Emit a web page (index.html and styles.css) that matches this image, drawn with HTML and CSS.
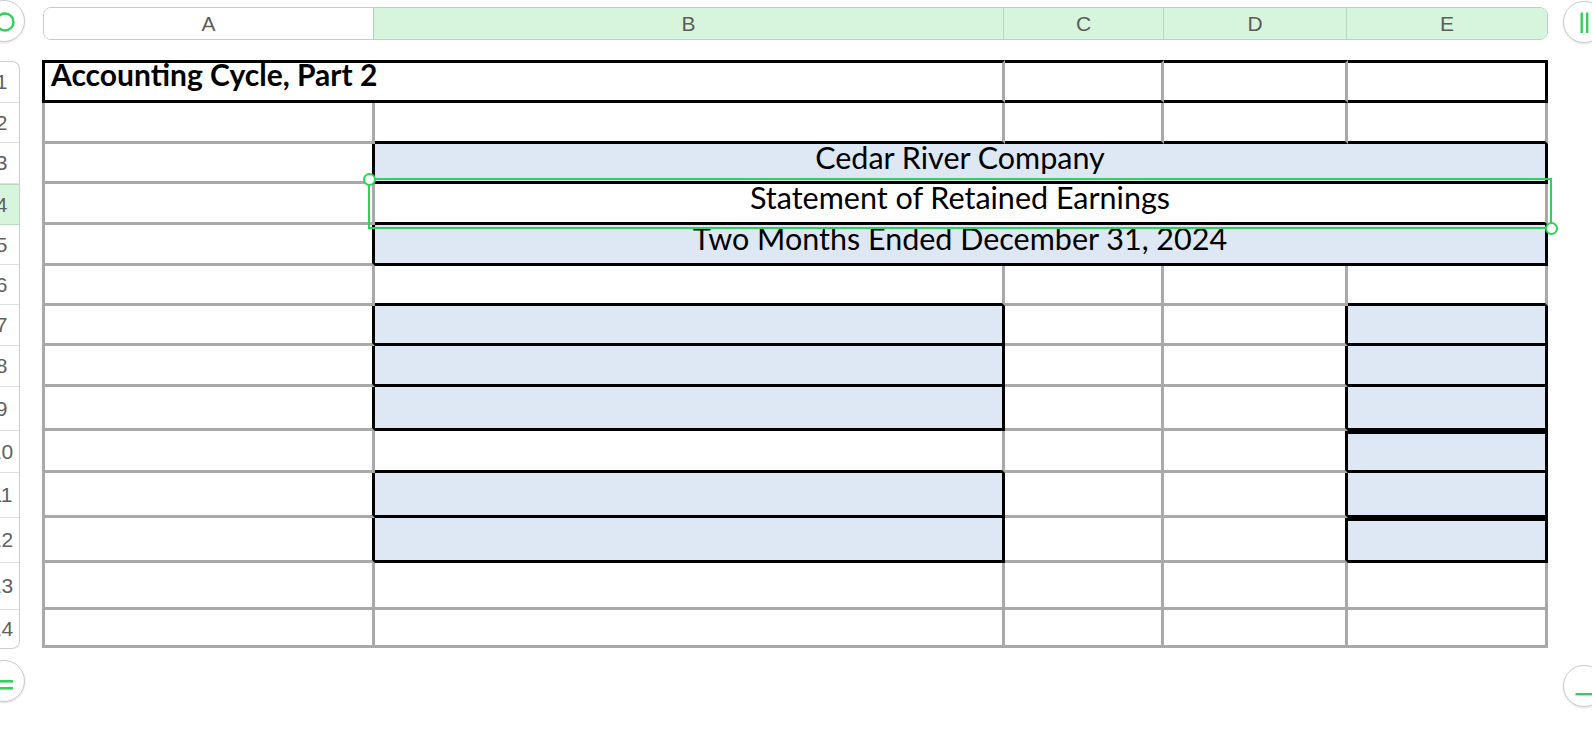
FILE: index.html
```html
<!DOCTYPE html>
<html>
<head>
<meta charset="utf-8">
<link rel="stylesheet" href="styles.css">
</head>
<body>
<div class="app">
  <div class="colhdr">
    <div class="ch ch-a">A</div>
    <div class="ch sel">B</div>
    <div class="ch sel">C</div>
    <div class="ch sel">D</div>
    <div class="ch sel last">E</div>
  </div>
  <div class="main">
    <div class="rowhdr">
      <div class="rh r1">1</div>
      <div class="rh r2">2</div>
      <div class="rh r3">3</div>
      <div class="rh r4 on">4</div>
      <div class="rh r5">5</div>
      <div class="rh r6">6</div>
      <div class="rh r7">7</div>
      <div class="rh r8">8</div>
      <div class="rh r9">9</div>
      <div class="rh r10">10</div>
      <div class="rh r11">11</div>
      <div class="rh r12">12</div>
      <div class="rh r13">13</div>
      <div class="rh r14">14</div>
    </div>
    <div class="grid">
      <!-- row 1 -->
      <div class="c l t lk bk span2"><span class="title">Accounting Cycle, Part 2</span></div>
      <div class="c t bk"></div>
      <div class="c t bk"></div>
      <div class="c t bk rk"></div>
      <!-- row 2 -->
      <div class="c l"></div>
      <div class="c bk"></div>
      <div class="c bk"></div>
      <div class="c bk"></div>
      <div class="c bk"></div>
      <!-- row 3 -->
      <div class="c l rk"></div>
      <div class="c span4 blue rk bk head">Cedar River Company</div>
      <!-- row 4 -->
      <div class="c l"></div>
      <div class="c span4 bk head">Statement of Retained Earnings</div>
      <!-- row 5 -->
      <div class="c l rk"></div>
      <div class="c span4 blue rk bk head">Two Months Ended December 31, 2024</div>
      <!-- row 6 -->
      <div class="c l"></div>
      <div class="c bk"></div>
      <div class="c"></div>
      <div class="c"></div>
      <div class="c bk"></div>
      <!-- row 7 -->
      <div class="c l rk"></div>
      <div class="c blue rk bk"></div>
      <div class="c"></div>
      <div class="c rk"></div>
      <div class="c blue rk bk"></div>
      <!-- row 8 -->
      <div class="c l rk"></div>
      <div class="c blue rk bk"></div>
      <div class="c"></div>
      <div class="c rk"></div>
      <div class="c blue rk bk"></div>
      <!-- row 9 -->
      <div class="c l rk"></div>
      <div class="c blue rk bk"></div>
      <div class="c"></div>
      <div class="c rk"></div>
      <div class="c blue rk bk"></div>
      <!-- row 10 -->
      <div class="c l"></div>
      <div class="c bk"></div>
      <div class="c"></div>
      <div class="c rk"></div>
      <div class="c blue tk rk bk"></div>
      <!-- row 11 -->
      <div class="c l rk"></div>
      <div class="c blue rk bk"></div>
      <div class="c"></div>
      <div class="c rk"></div>
      <div class="c blue rk bk"></div>
      <!-- row 12 -->
      <div class="c l rk"></div>
      <div class="c blue rk bk"></div>
      <div class="c"></div>
      <div class="c rk"></div>
      <div class="c blue tk rk bk"></div>
      <!-- row 13 -->
      <div class="c l"></div>
      <div class="c"></div>
      <div class="c"></div>
      <div class="c"></div>
      <div class="c"></div>
      <!-- row 14 -->
      <div class="c l"></div>
      <div class="c"></div>
      <div class="c"></div>
      <div class="c"></div>
      <div class="c"></div>
    </div>
  </div>

  <div class="selection">
    <span class="handle h-tl"></span>
    <span class="handle h-br"></span>
  </div>

  <div class="ctl ctl-tl">
    <svg width="42" height="42" viewBox="0 0 42 42"><circle cx="22" cy="22" r="8.5" fill="none" stroke="#30d158" stroke-width="2.4"/></svg>
  </div>
  <div class="ctl ctl-tr">
    <svg width="42" height="42" viewBox="0 0 42 42"><rect x="17.5" y="11.5" width="2.4" height="20.5" fill="#30d158"/><rect x="23" y="11.5" width="2.4" height="20.5" fill="#30d158"/></svg>
  </div>
  <div class="ctl ctl-bl">
    <svg width="42" height="42" viewBox="0 0 42 42"><rect x="10" y="20" width="20" height="2.6" fill="#30d158"/><rect x="10" y="27" width="20" height="2.6" fill="#30d158"/></svg>
  </div>
  <div class="ctl ctl-br">
    <svg width="42" height="42" viewBox="0 0 42 42"><rect x="12.5" y="28" width="20" height="2.4" fill="#30d158"/></svg>
  </div>
</div>
</body>
</html>
```

FILE: styles.css
```css
html, body {
  margin: 0;
  padding: 0;
  background: #ffffff;
}

.app {
  position: relative;
  width: 1592px;
  height: 736px;
  overflow: hidden;
  background: #ffffff;
  font-family: "Liberation Sans", Arial, sans-serif;
}

/* column header bar */
.colhdr {
  margin: 7px 0 0 43px;
  width: 1505px;
  height: 33px;
  box-sizing: border-box;
  border: 1px solid #c9c9c9;
  border-radius: 8px;
  overflow: hidden;
  display: grid;
  grid-template-columns: 330px 630px 160px 183px 1fr;
}

.ch {
  display: flex;
  align-items: center;
  justify-content: center;
  font-size: 21px;
  color: #5c5c5c;
  border-right: 1px solid #b9d9bf;
  background: #ffffff;
}

.ch-a {
  border-right-color: #c4c4c4;
}

.ch.sel {
  background: #d7f5dc;
}

.ch.last {
  border-right: none;
}

/* main area */
.main {
  display: flex;
  align-items: flex-start;
  margin-top: 20px;
}

.rowhdr {
  margin-left: -16px;
  margin-top: 1px;
  width: 36px;
  box-sizing: border-box;
  border: 1px solid #cdcdcd;
  border-left: none;
  border-radius: 0 8px 8px 0;
  overflow: hidden;
  display: grid;
  grid-template-rows: 41px 40px 41px 41px 40px 40px 41px 41px 44px 42px 45px 45px 47px 38px;
  flex: none;
}

.rh {
  display: flex;
  align-items: center;
  justify-content: center;
  font-size: 21px;
  color: #5f5f5f;
  border-bottom: 1px solid #dedede;
  box-sizing: border-box;
}

.rh.r14 {
  border-bottom: none;
}

.rh.on {
  background: #d7f5dc;
  border-top: 1px solid #b9d9bf;
  border-bottom-color: #b9d9bf;
}

/* sheet grid */
.grid {
  margin-left: 22px;
  display: grid;
  grid-template-columns: 333px 630px 159px 184px 200px;
  grid-template-rows: 43px 41px 40px 41px 41px 40px 40px 41px 44px 42px 45px 45px 47px 38px;
  flex: none;
  margin-top: 0;
}

.c {
  box-sizing: border-box;
  border-right: 3px solid #a9a9a9;
  border-bottom: 3px solid #a9a9a9;
  min-width: 0;
  background: #ffffff;
}

.c.l { border-left: 3px solid #a9a9a9; }
.c.t { border-top: 3px solid #000000; }
.c.lk { border-left-color: #000000; }
.c.rk { border-right-color: #000000; }
.c.bk { border-bottom-color: #000000; }
.c.tk { border-top: 3px solid #000000; }

.c.blue { background: #dde8f4; }

.span2 { grid-column: span 2; }
.span4 { grid-column: span 4; }

.title {
  display: block;
  padding-left: 6px;
  font-family: "Lato", "Liberation Sans", sans-serif;
  font-weight: 700;
  font-size: 30px;
  line-height: 22px;
  white-space: nowrap;
  color: #000000;
}

.head {
  font-family: "Lato", "Liberation Sans", sans-serif;
  font-size: 30.5px;
  line-height: 26px;
  text-align: center;
  color: #000000;
  white-space: nowrap;
}

/* selection overlay */
.selection {
  position: absolute;
  left: 368px;
  top: 178px;
  width: 1184px;
  height: 51px;
  box-sizing: border-box;
  border: 2px solid #30d158;
  pointer-events: none;
}

.handle {
  position: absolute;
  width: 13px;
  height: 13px;
  box-sizing: border-box;
  border: 2px solid #30d158;
  border-radius: 50%;
  background: #ffffff;
}

.h-tl { left: -7.5px; top: -7.5px; }
.h-br { right: -7.5px; bottom: -7.5px; }

/* floating round controls */
.ctl {
  position: absolute;
  width: 42px;
  height: 42px;
  box-sizing: border-box;
  border: 1px solid #cbcbcb;
  border-radius: 50%;
  background: #ffffff;
  box-shadow: 0 1px 2px rgba(0, 0, 0, 0.12);
}

.ctl svg {
  position: absolute;
  left: -1px;
  top: -1px;
}

.ctl-tl { left: -17px; top: 0px; }
.ctl-tr { left: 1563px; top: 1px; }
.ctl-bl { left: -17px; top: 660px; }
.ctl-br { left: 1563px; top: 665px; }
```
